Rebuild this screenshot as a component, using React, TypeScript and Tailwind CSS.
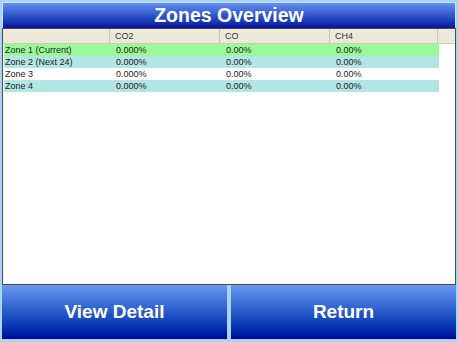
export default function App() {
  const rows = [
    { name: "Zone 1 (Current)", co2: "0.000%", co: "0.00%", ch4: "0.00%", bg: "bg-[#9afa98]" },
    { name: "Zone 2 (Next 24)", co2: "0.000%", co: "0.00%", ch4: "0.00%", bg: "bg-[#b3e5e4]" },
    { name: "Zone 3", co2: "0.000%", co: "0.00%", ch4: "0.00%", bg: "bg-white" },
    { name: "Zone 4", co2: "0.000%", co: "0.00%", ch4: "0.00%", bg: "bg-[#b3e5e4]" },
  ];

  return (
    <div
      className="w-[458px] h-[342px] bg-[#a9d4f4] flex flex-col px-[2px] pt-[2px] overflow-hidden"
      style={{ fontFamily: '"Liberation Sans", Arial, sans-serif' }}
    >
      {/* title bar */}
      <div className="h-[26px] bg-gradient-to-b from-[#6590f2] to-[#0b0b9c] border-x border-t border-[#c8e2f8] flex items-center justify-center text-white font-bold text-[19.5px] leading-none">
        Zones Overview
      </div>

      {/* zones table */}
      <div className="h-[257px] bg-white border border-[#4a4a4a] flex flex-col">
        <div className="grid grid-cols-[107px_110px_110px_108px_1fr] h-[15px] bg-[#ece9d8] border-b border-[#cdcabb] text-[9px] text-[#333] leading-none">
          <div className="border-r border-[#c9c6b6]"></div>
          <div className="border-r border-[#c9c6b6] pl-[5px] flex items-center">CO2</div>
          <div className="border-r border-[#c9c6b6] pl-[5px] flex items-center">CO</div>
          <div className="border-r border-[#c9c6b6] pl-[5px] flex items-center">CH4</div>
          <div></div>
        </div>
        {rows.map((r) => (
          <div
            key={r.name}
            className={`grid grid-cols-[106px_110px_110px_109px] w-[435px] ml-[1px] h-[12px] ${r.bg} text-[9px] text-[#222] leading-none`}
          >
            <div className="pl-[1px] flex items-center">{r.name}</div>
            <div className="pl-[6px] flex items-center">{r.co2}</div>
            <div className="pl-[6px] flex items-center">{r.co}</div>
            <div className="pl-[6px] flex items-center">{r.ch4}</div>
          </div>
        ))}
      </div>

      {/* buttons */}
      <div className="flex gap-[4px] h-[54px]">
        <button className="flex-1 bg-gradient-to-b from-[#6898f2] to-[#00009e] text-white font-bold text-[19px] flex items-center justify-center">
          View Detail
        </button>
        <button className="flex-1 bg-gradient-to-b from-[#6898f2] to-[#00009e] text-white font-bold text-[19px] flex items-center justify-center">
          Return
        </button>
      </div>
    </div>
  );
}
